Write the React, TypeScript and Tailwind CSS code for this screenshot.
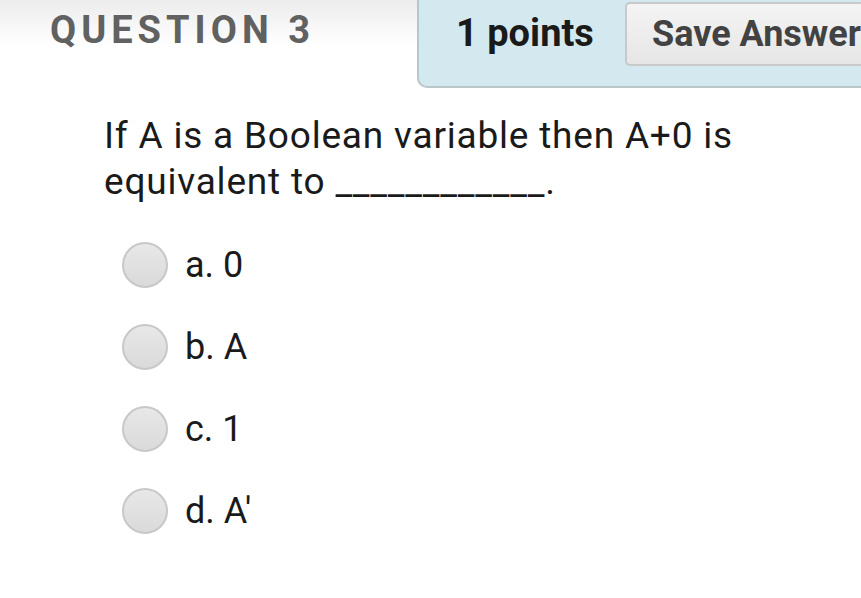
import React from "react";

const Radio = () => (
  <div className="w-[46px] h-[46px] rounded-full border-2 border-[#c8c8c8] bg-gradient-to-b from-[#e8e8e8] to-[#dadada] shrink-0" />
);

export default function App() {
  const opts = ["a. 0", "b. A", "c. 1", "d. A'"];
  return (
    <div
      className="w-[861px] h-[598px] bg-white overflow-hidden"
      style={{ fontFamily: "Roboto, 'Liberation Sans', sans-serif" }}
    >
      <div className="flex items-start h-[90px] bg-gradient-to-b from-[#ececec] via-white to-white">
        <div className="w-[417px] pl-[50px] pt-[10px] text-[38px] font-bold tracking-[5px] text-[#616161] leading-[40px]">
          QUESTION 3
        </div>
        <div className="flex-1 h-[88px] bg-[#d3e9ef] border-l-2 border-b-2 border-[#b9c6ca] rounded-bl-[10px] flex items-start pt-[2px]">
          <div className="pl-[37px] w-[206px] pt-[10px] text-[38px] font-bold text-[#1a1a1a] leading-[42px]">
            1 points
          </div>
          <div className="flex-1 h-[64px] bg-gradient-to-b from-[#f4f4f4] to-[#e6e6e6] border-2 border-r-0 border-[#c9c9c9] rounded-l-[5px] pl-[25px] pt-[9px] text-[36px] font-bold text-[#424242] leading-[42px] whitespace-nowrap overflow-hidden">
            Save Answer
          </div>
        </div>
      </div>
      <div className="pl-[104px] pt-[23px] text-[37px] tracking-[0.8px] text-[#1a1a1a] leading-[46px]">
        <div>If A is a Boolean variable then A+0 is</div>
        <div>equivalent to ____________.</div>
      </div>
      <div className="pl-[122px] pt-[37px] flex flex-col gap-[36px]">
        {opts.map((o) => (
          <div key={o} className="flex items-center gap-[17px] h-[46px]">
            <Radio />
            <span className="text-[36px] text-[#1a1a1a] leading-[46px]">{o}</span>
          </div>
        ))}
      </div>
    </div>
  );
}
